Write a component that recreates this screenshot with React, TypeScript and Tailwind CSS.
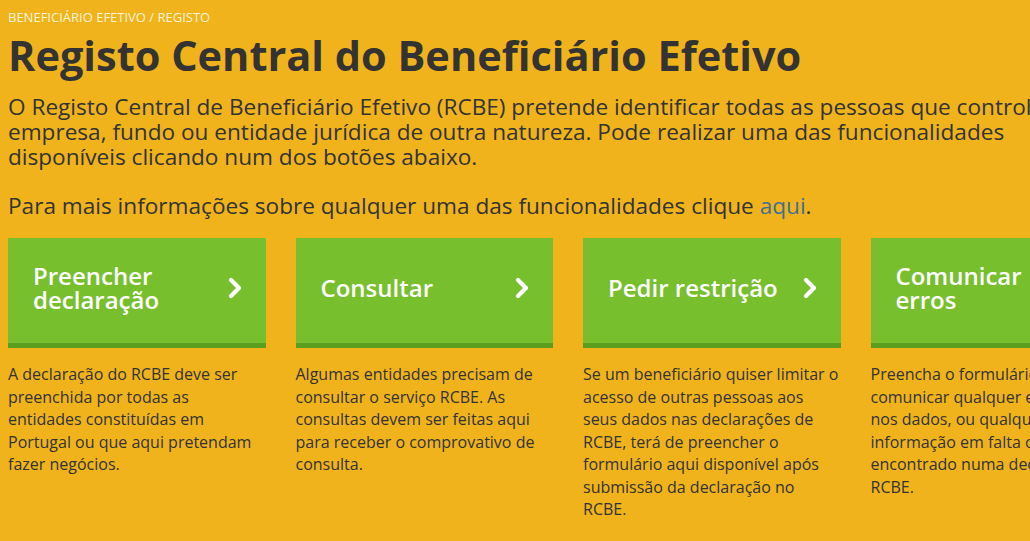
const cards = [
  {
    title: ["Preencher", "declaração"],
    text: ["A declaração do RCBE deve ser preenchida por todas as entidades constituídas em Portugal ou que aqui pretendam fazer negócios."],
  },
  {
    title: ["Consultar"],
    text: ["Algumas entidades precisam de consultar o serviço RCBE. As consultas devem ser feitas aqui para receber o comprovativo de consulta."],
  },
  {
    title: ["Pedir restrição"],
    text: ["Se um beneficiário quiser limitar o acesso de outras pessoas aos seus dados nas declarações de RCBE, terá de preencher o formulário aqui disponível após submissão da declaração no RCBE."],
  },
  {
    title: ["Comunicar", "erros"],
    // last card is cut by the window edge, keep its wrap fixed
    text: [
      "Preencha o formulário para",
      "comunicar qualquer erro existente",
      "nos dados, ou qualquer",
      "informação em falta ou que tenha",
      "encontrado numa declaração do",
      "RCBE.",
    ],
  },
];

function Chevron() {
  return (
    <svg width="18" height="24" viewBox="0 0 18 24" className="shrink-0">
      <polyline
        points="5,4 13,12 5,20"
        fill="none"
        stroke="white"
        strokeWidth="4.2"
        strokeLinecap="round"
        strokeLinejoin="round"
      />
    </svg>
  );
}

export default function App() {
  return (
    <div
      className="h-[541px] w-[1030px] overflow-hidden bg-[#f0b31c] text-[#333333]"
      style={{ fontFamily: '"Open Sans", sans-serif' }}
    >
      <div className="w-[1136px] px-2 pt-[9px]">
        <div className="text-[13px] leading-[16px] uppercase text-[#fdf3d6]">
          Beneficiário Efetivo / Registo
        </div>
        <h1 className="mt-[6px] text-[41.5px] font-bold leading-[48px] text-[#333333]">
          Registo Central do Beneficiário Efetivo
        </h1>
        <p className="mt-[15px] text-[22.6px] leading-[25px] whitespace-nowrap">
          O Registo Central de Beneficiário Efetivo (RCBE) pretende identificar todas as pessoas que controlam uma
          <br />
          empresa, fundo ou entidade jurídica de outra natureza. Pode realizar uma das funcionalidades
          <br />
          disponíveis clicando num dos botões abaixo.
        </p>
        <p className="mt-[24px] text-[22.6px] leading-[25px]">
          Para mais informações sobre qualquer uma das funcionalidades clique{" "}
          <a className="text-[#3f6e96]">aqui</a>.
        </p>
        <div className="mt-[20px] grid grid-cols-4 gap-[30px]">
          {cards.map((c) => (
            <div key={c.title.join(" ")}>
              <div className="flex h-[110px] items-center justify-between border-b-[5px] border-[#5c9e1f] bg-[#77bf2d] pb-[5px] pl-[25px] pr-[22px]">
                <div className="text-[24px] font-semibold leading-[24px] text-white">
                  {c.title.map((t) => (
                    <div key={t}>{t}</div>
                  ))}
                </div>
                <Chevron />
              </div>
              <p className="mt-[15px] text-[16px] leading-[22.5px]">
                {c.text.length === 1
                  ? c.text[0]
                  : c.text.map((l) => (
                      <span key={l} className="block whitespace-nowrap">
                        {l}
                      </span>
                    ))}
              </p>
            </div>
          ))}
        </div>
      </div>
    </div>
  );
}
